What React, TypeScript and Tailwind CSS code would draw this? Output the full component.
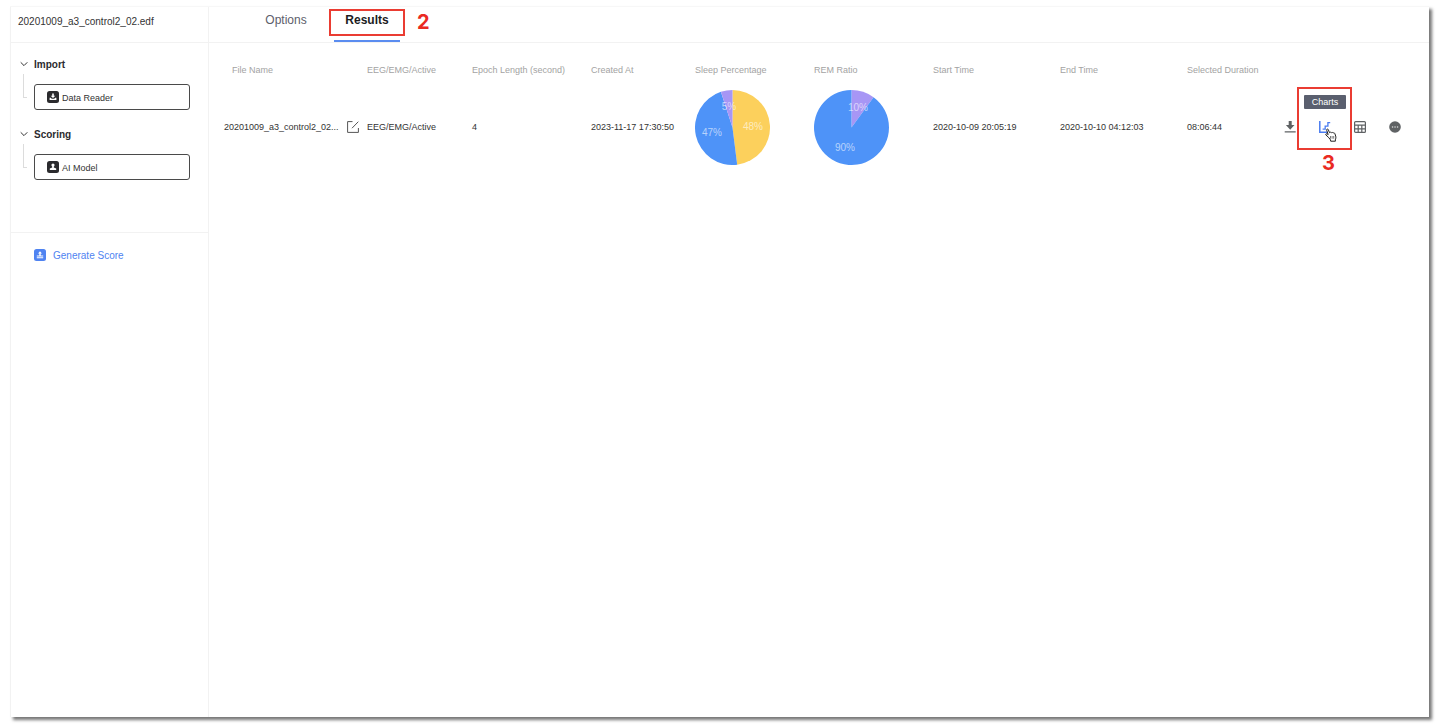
import type { ReactNode } from 'react';

interface Slice {
  label: string;
  value: number;
  color: string;
  x: number;
  y: number;
}

const sleepSlices: Slice[] = [
  { label: '48%', value: 48, color: '#fcd05c', x: 58, y: 40 },
  { label: '47%', value: 47, color: '#4e93f8', x: 17, y: 46 },
  { label: '5%', value: 5, color: '#a796f5', x: 34, y: 20 },
];

const remSlices: Slice[] = [
  { label: '10%', value: 10, color: '#a796f5', x: 44, y: 21 },
  { label: '90%', value: 90, color: '#4e93f8', x: 31, y: 61 },
];

const columns = [
  { title: 'File Name', className: 'w-[158px] pl-[23px]' },
  { title: 'EEG/EMG/Active', className: 'w-[105px]' },
  { title: 'Epoch Length (second)', className: 'w-[119px]' },
  { title: 'Created At', className: 'w-[104px]' },
  { title: 'Sleep Percentage', className: 'w-[119px]' },
  { title: 'REM Ratio', className: 'w-[119px]' },
  { title: 'Start Time', className: 'w-[127px]' },
  { title: 'End Time', className: 'w-[127px]' },
  { title: 'Selected Duration', className: 'w-[97px]' },
];

function PieChart({ name, slices }: { name: string; slices: Slice[] }) {
  const c = 37.5;
  let start = 0;

  const paths = slices.map((slice) => {
    const end = start + slice.value / 100;
    const a = start * 2 * Math.PI;
    const b = end * 2 * Math.PI;
    const large = slice.value > 50 ? 1 : 0;
    const d = `M${c} ${c}L${c + c * Math.sin(a)} ${c - c * Math.cos(a)}A${c} ${c} 0 ${large} 1 ${c + c * Math.sin(b)} ${c - c * Math.cos(b)}Z`;
    start = end;
    return <path key={slice.label} d={d} fill={slice.color} />;
  });

  return (
    <svg role="img" aria-label={name} viewBox="0 0 75 75" className="block h-[75px] w-[75px]">
      {paths}
      {slices.map((slice) => (
        <text
          key={slice.label}
          x={slice.x}
          y={slice.y}
          textAnchor="middle"
          className="fill-white/60 text-[10px]"
        >
          {slice.label}
        </text>
      ))}
    </svg>
  );
}

function TrayIcon({ className }: { className: string }) {
  return (
    <svg viewBox="0 0 12 12" className={`h-3 w-3 shrink-0 ${className}`} aria-hidden="true">
      <rect width="12" height="12" rx="2.5" fill="currentColor" />
      <path d="M5.2 2.6h1.6v2.1h1.5L6 7 3.7 4.7h1.5z" fill="#fff" />
      <path d="M2.6 6.8h1.2l.9 1h2.6l.9-1h1.2v2.3H2.6z" fill="#fff" />
    </svg>
  );
}

function ModelIcon({ className }: { className: string }) {
  return (
    <svg viewBox="0 0 12 12" className={`h-3 w-3 shrink-0 ${className}`} aria-hidden="true">
      <rect width="12" height="12" rx="2.5" fill="currentColor" />
      <circle cx="6" cy="4.1" r="1.6" fill="#fff" />
      <path d="M5.2 5h1.6v1.6l2.4.9v1.4H2.8V7.5l2.4-.9z" fill="#fff" />
    </svg>
  );
}

function ScoreIcon() {
  return (
    <svg viewBox="0 0 12 12" className="h-3 w-3 shrink-0" aria-hidden="true">
      <rect width="12" height="12" rx="2.5" fill="currentColor" />
      <path d="M6 2.3 8 4.5H6.7v2h2.5v1H2.8v-1h2.5v-2H4zM2.8 8.3h6.4v.9H2.8z" fill="#fff" />
    </svg>
  );
}

function Step({ title, label, icon }: { title: string; label: string; icon: ReactNode }) {
  return (
    <section className="h-[70px]">
      <h3>
        <button type="button" className="flex h-5 items-center gap-[6px] text-[10px] font-bold text-[#2b2b2e]">
          <svg viewBox="0 0 8 8" className="h-2 w-2" fill="none" stroke="#333" aria-hidden="true">
            <path d="M.7 2.3 4 5.6l3.3-3.3" />
          </svg>
          {title}
        </button>
      </h3>
      <div className="flex pl-[3px]">
        <span className="mr-[7px] h-6 w-1 border-b border-l border-[#dcdcdc]" />
        <button
          type="button"
          className="mt-[10px] flex h-[26px] flex-1 items-center gap-[3px] rounded-[3px] border border-[#4a4a4a] px-3 text-[9px] leading-[14px] text-[#333]"
        >
          {icon}
          <span className="pt-[2px]">{label}</span>
        </button>
      </div>
    </section>
  );
}

function Sidebar() {
  return (
    <aside className="w-[199px] shrink-0 border-x border-[#f2f2f2]">
      <h1 className="flex h-9 items-center border-b border-[#f2f2f2] pb-[6px] pl-[7px] text-[10px] text-[#333]">
        20201009_a3_control2_02.edf
      </h1>
      <div className="h-[190px] border-b border-[#f2f2f2] pr-[18px] pl-[9px] pt-[11px]">
        <Step title="Import" label="Data Reader" icon={<TrayIcon className="text-[#2b2b2e]" />} />
        <Step title="Scoring" label="AI Model" icon={<ModelIcon className="text-[#2b2b2e]" />} />
      </div>
      <button type="button" className="flex h-11 items-center gap-[7px] pl-[23px] text-[10px] text-[#4f83f1]">
        <ScoreIcon />
        Generate Score
      </button>
    </aside>
  );
}

function Tabs() {
  return (
    <nav className="flex h-9 gap-[15px] border-b border-[#f2f2f2] pl-11 text-[12px]">
      <button type="button" className="w-[66px] pb-[10px] text-[#5d5d6b]">
        Options
      </button>
      <button
        type="button"
        aria-current="page"
        className="relative w-[66px] border-b-2 border-[#5a8cf0] pb-2 font-bold text-[#1c1c1e]"
      >
        Results
        <span className="absolute -left-[5px] top-[2px] h-[27px] w-[76px] border-2 border-[#ea3c32]" />
        <span className="absolute left-[83px] top-[2px] font-['Inter',sans-serif] text-[20px] leading-[26px] text-[#ea2a22]">
          2
        </span>
      </button>
    </nav>
  );
}

function RowActions() {
  return (
    <div className="flex items-center gap-[23px] text-[#5f6264]">
      <button type="button" aria-label="Download">
        <svg viewBox="0 0 12 12" className="block h-3 w-3" fill="currentColor" aria-hidden="true">
          <path d="M4.7.1h3v4h2.8L6.2 8.8 1.900 4.100h2.800zM.7 10.200h11v1.400H.7z" />
        </svg>
      </button>
      <button type="button" aria-label="Charts" className="relative">
        <svg viewBox="0 0 12 12" className="block h-3 w-3" fill="none" stroke="#4a7cf0" aria-hidden="true">
          <path d="M.8 0v11.2H9" strokeWidth="1.5" />
          <path d="M3.6 8.200h2.600V5.200h2.700V1.600h2.300" strokeWidth="1.300" />
        </svg>
        <span className="absolute -left-[22px] -top-[34px] h-[63px] w-[55px] border-2 border-[#ea3c32]" />
        <span className="absolute -left-[15px] -top-[26px] w-[42px] rounded-[1px] bg-[#5a5f6e] text-[9px] leading-[14px] text-white">
          Charts
        </span>
        <span className="absolute left-[3px] top-[29px] font-['Inter',sans-serif] text-[20px] font-bold leading-[26px] text-[#ea2a22]">
          3
        </span>
        <svg viewBox="0 0 12 15" className="absolute left-[6px] top-[7px] h-[15px] w-3" aria-hidden="true">
          <path
            d="M3.4 9.2 1 7.1C.2 6.3 1.1 5.3 2.1 5.9l1.1.7L1.7 2.2C1.4.9 2.8.5 3.3 1.7l1.2 3c.5-.7 1.3-.6 1.8 0 .6-.5 1.3-.4 1.7.3.7-.4 1.6-.1 1.9.7l.8 2.4c.4 1.6.1 2.5-.4 3.8l.1 1.3H5.7l-.2-1.3z"
            fill="#fff"
            stroke="#222"
            strokeLinejoin="round"
          />
          <path d="M5.5 8v2.7M7.1 8v2.7M8.700 8v2.700" stroke="#222" strokeWidth=".6" />
        </svg>
      </button>
      <button type="button" aria-label="Table">
        <svg viewBox="0 0 12 12" className="block h-3 w-3" fill="none" stroke="currentColor" aria-hidden="true">
          <rect x=".6" y=".6" width="10.8" height="10.8" rx="1" strokeWidth="1.2" />
          <path d="M.6 4.2h10.8M.6 7.8h10.800M4.200 4.200v7.200M7.800 4.200v7.200" strokeWidth="1.2" />
        </svg>
      </button>
      <button type="button" aria-label="More">
        <svg viewBox="0 0 12 12" className="block h-3 w-3" aria-hidden="true">
          <circle cx="6" cy="6" r="5.8" fill="currentColor" />
          <path d="M2.9 5.4h1.3v1.2H2.9zM5.4 5.4h1.3v1.2H5.4zM7.9 5.4h1.3v1.2H7.9z" fill="#fff" />
        </svg>
      </button>
    </div>
  );
}

function ResultsTable() {
  return (
    <table className="w-full table-fixed text-left text-[9px] leading-[14px] whitespace-nowrap text-[#333]">
      <thead>
        <tr className="h-[46px] text-[#a3a3a3]">
          {columns.map((column) => (
            <th key={column.title} scope="col" className={`pt-2 font-normal ${column.className}`}>
              {column.title}
            </th>
          ))}
          <td />
        </tr>
      </thead>
      <tbody>
        <tr className="h-[76px]">
          <td className="pl-[15px]">
            <div className="flex items-center gap-2">
              <span>20201009_a3_control2_02...</span>
              <button type="button" aria-label="Rename">
                <svg viewBox="0 0 12 12" className="block h-3 w-3" fill="none" stroke="#555" aria-hidden="true">
                  <path d="M5.5.6H.6v10.800h10.800V7M5 7.200 11.300.7" />
                </svg>
              </button>
            </div>
          </td>
          <td>EEG/EMG/Active</td>
          <td>4</td>
          <td>2023-11-17 17:30:50</td>
          <td>
            <PieChart name="Sleep percentage" slices={sleepSlices} />
          </td>
          <td>
            <PieChart name="REM ratio" slices={remSlices} />
          </td>
          <td>2020-10-09 20:05:19</td>
          <td>2020-10-10 04:12:03</td>
          <td>08:06:44</td>
          <td>
            <RowActions />
          </td>
        </tr>
      </tbody>
    </table>
  );
}

export default function App() {
  return (
    <div className="flex min-h-screen bg-white pt-[6px] pr-[11px] pb-[11px] pl-[10px] font-['Liberation_Sans',Arial,sans-serif]">
      <div className="flex flex-1 border-t border-[#f7f7f7] bg-white shadow-[3px_3px_3px_#777]">
        <Sidebar />
        <main className="min-w-0 flex-1">
          <Tabs />
          <ResultsTable />
        </main>
      </div>
    </div>
  );
}
